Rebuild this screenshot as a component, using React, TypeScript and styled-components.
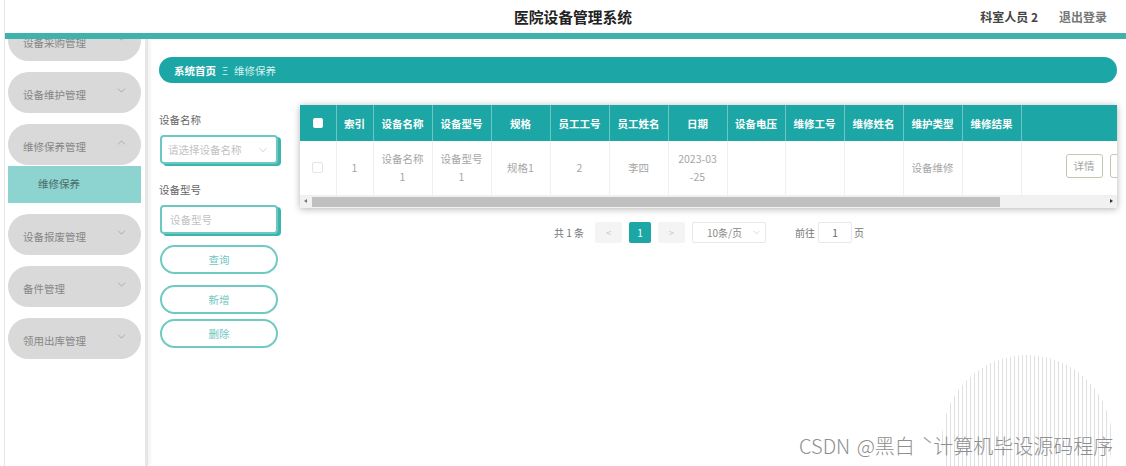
import React from "react";
import styled, { createGlobalStyle } from "styled-components";
import { ChevronDown, ChevronUp } from "lucide-react";

const GlobalStyle = createGlobalStyle`
  html, body {
    margin: 0;
    padding: 0;
    background: #fff;
    overflow: hidden;
  }
  * {
    box-sizing: border-box;
  }
  body {
    font-family: "Noto Sans CJK SC", "Noto Sans", sans-serif;
  }
`;

const menus = [
  { name: "设备采购管理", clipped: true },
  { name: "设备维护管理" },
  { name: "维修保养管理", open: true, children: ["维修保养"] },
  { name: "设备报废管理" },
  { name: "备件管理" },
  { name: "领用出库管理" },
];

const columns = [
  { title: "索引", width: 37 },
  { title: "设备名称", width: 59 },
  { title: "设备型号", width: 59 },
  { title: "规格", width: 59 },
  { title: "员工工号", width: 59 },
  { title: "员工姓名", width: 59 },
  { title: "日期", width: 59 },
  { title: "设备电压", width: 58 },
  { title: "维修工号", width: 59 },
  { title: "维修姓名", width: 59 },
  { title: "维护类型", width: 59 },
  { title: "维修结果", width: 59 },
];

const row = ["1", "设备名称1", "设备型号1", "规格1", "2", "李四", "2023-03\n-25", "", "", "", "设备维修", ""];

export default function App() {
  return (
    <Page>
      <GlobalStyle />
      <Header>
        <HeaderTitle>医院设备管理系统</HeaderTitle>
        <HeaderUser>科室人员 2</HeaderUser>
        <Logout>退出登录</Logout>
      </Header>
      <Body>
        <Sidebar>
          {menus.map((menu) => (
            <MenuGroup key={menu.name} $clipped={menu.clipped}>
              <MenuPill>
                {menu.name}
                <MenuArrow>
                  {menu.open ? <ChevronUp size={13} strokeWidth={1} /> : <ChevronDown size={13} strokeWidth={1} />}
                </MenuArrow>
              </MenuPill>
              {menu.children?.map((child) => <SubItem key={child}>{child}</SubItem>)}
            </MenuGroup>
          ))}
        </Sidebar>
        <Main>
          <Breadcrumb>
            <strong>系统首页</strong>
            <BreadSep>Ξ</BreadSep>
            <span>维修保养</span>
          </Breadcrumb>
          <Content>
            <SearchForm>
              <FieldLabel>设备名称</FieldLabel>
              <Field>
                <Placeholder>请选择设备名称</Placeholder>
                <ChevronDown size={14} strokeWidth={1} color="#b5b5b5" />
              </Field>
              <FieldLabel $gap={16}>设备型号</FieldLabel>
              <Field>
                <Placeholder $inset={2}>设备型号</Placeholder>
              </Field>
              <OutlineButton $top={11}>查询</OutlineButton>
              <OutlineButton $top={11}>新增</OutlineButton>
              <OutlineButton $top={5}>删除</OutlineButton>
            </SearchForm>
            <TableArea>
              <TableCard>
                <TableClip>
                  <Table>
                    <colgroup>
                      <Col $width={36} />
                      {columns.map((c) => (
                        <Col key={c.title} $width={c.width} />
                      ))}
                      <Col $width={240} />
                    </colgroup>
                    <thead>
                      <tr>
                        <Th>
                          <HeadCheck />
                        </Th>
                        {columns.map((c) => (
                          <Th key={c.title}>{c.title}</Th>
                        ))}
                        <Th />
                      </tr>
                    </thead>
                    <tbody>
                      <tr>
                        <Td>
                          <RowCheck />
                        </Td>
                        {row.map((value, i) => (
                          <Td key={i}>{value}</Td>
                        ))}
                        <Td>
                          <Actions>
                            <ActionButton>详情</ActionButton>
                            <ActionButton>修改</ActionButton>
                          </Actions>
                        </Td>
                      </tr>
                    </tbody>
                  </Table>
                </TableClip>
                <ScrollBar>
                  <ScrollArrow $dir="left" />
                  <ScrollTrack>
                    <ScrollThumb />
                  </ScrollTrack>
                  <ScrollArrow $dir="right" />
                </ScrollBar>
              </TableCard>
              <Pagination>
                <PageTotal>共 1 条</PageTotal>
                <PageButton>&lt;</PageButton>
                <PageCurrent>1</PageCurrent>
                <PageButton>&gt;</PageButton>
                <PageSize>
                  10条/页
                  <ChevronDown size={11} strokeWidth={1} color="#b5b5b5" />
                </PageSize>
                <PageText $left={29}>前往</PageText>
                <PageInput>1</PageInput>
                <PageText $left={2}>页</PageText>
              </Pagination>
            </TableArea>
          </Content>
        </Main>
      </Body>
      <Stripes />
      <Watermark>CSDN @黑白 ˋ计算机毕设源码程序</Watermark>
    </Page>
  );
}

const Page = styled.div`
  position: relative;
  width: 1122px;
  height: 466px;
  overflow: hidden;
  margin-left: 4px;
  border-left: 1px solid #e6e6e6;
`;

const Header = styled.header`
  display: flex;
  align-items: center;
  height: 39px;
  padding: 0 19px 0 0;
  background: #fff;
  border-bottom: 6px solid #3fb3ab;
  position: relative;
  z-index: 2;
`;

const HeaderTitle = styled.h1`
  margin: 0 0 0 509px;
  font-size: 14.75px;
  font-weight: 700;
  color: #222;
`;

const HeaderUser = styled.span`
  margin-left: auto;
  font-size: 12px;
  font-weight: 700;
  color: #444;
`;

const Logout = styled.span`
  margin-left: 21px;
  font-size: 12px;
  font-weight: 700;
  color: #777;
`;

const Body = styled.div`
  display: flex;
  height: 427px;
`;

const Sidebar = styled.aside`
  width: 143px;
  padding: 0 0 0 3px;
  border-right: 3px solid #e6e6e6;
  box-shadow: 2px 0 4px rgba(0, 0, 0, 0.06);
  overflow: hidden;
  flex-shrink: 0;
`;

const MenuGroup = styled.div<{ $clipped?: boolean }>`
  margin-top: ${(p) => (p.$clipped ? "-19px" : "11px")};
`;

const MenuPill = styled.div`
  display: flex;
  align-items: center;
  justify-content: space-between;
  width: 133px;
  height: 41px;
  padding: 3px 13px 0 15px;
  border-radius: 21px;
  background: #d9d9d9;
  color: #868686;
  font-size: 10.5px;
`;

const MenuArrow = styled.span`
  display: flex;
  margin-top: -7px;
`;

const SubItem = styled.div`
  width: 133px;
  height: 37px;
  margin: 1px 0;
  padding: 0 0 0 30px;
  background: #8dd3cf;
  color: #4a6b69;
  font-size: 10.5px;
  line-height: 36px;
`;

const Main = styled.main`
  flex: 1;
  min-width: 0;
  padding: 18px 9px 0 11px;
`;

const Breadcrumb = styled.nav`
  display: flex;
  align-items: center;
  height: 26px;
  padding-left: 15px;
  border-radius: 13px;
  background: #1ca7a6;
  color: #d8f1f0;
  font-size: 10.5px;

  strong {
    color: #fff;
    font-weight: 700;
  }
`;

const BreadSep = styled.span`
  margin: 0 6px;
  font-size: 10px;
`;

const Content = styled.div`
  display: flex;
  align-items: flex-start;
  margin-top: 22px;
`;

const SearchForm = styled.div`
  width: 141px;
  padding-top: 5px;
  flex-shrink: 0;
`;

const FieldLabel = styled.div<{ $gap?: number }>`
  height: 20px;
  margin-top: ${(p) => p.$gap ?? 0}px;
  margin-bottom: 5px;
  font-size: 10.5px;
  line-height: 20px;
  color: #666;
`;

const Field = styled.div`
  display: flex;
  align-items: center;
  justify-content: space-between;
  width: 118px;
  height: 29px;
  margin-left: 1px;
  padding: 0 6px;
  border: 2px solid #6cc8c2;
  border-radius: 4px;
  background: #fff;
  box-shadow: 3px 2px 0 #3cb5ad;
`;

const Placeholder = styled.span<{ $inset?: number }>`
  margin-left: ${(p) => p.$inset ?? 0}px;
  font-size: 10.5px;
  color: #c2c2c2;
`;

const OutlineButton = styled.button<{ $top: number }>`
  display: block;
  width: 118px;
  height: 29px;
  margin: ${(p) => p.$top}px 0 0 1px;
  padding: 0;
  border: 2px solid #6fcac4;
  border-radius: 15px;
  background: #fff;
  color: #6fc5bf;
  font-family: inherit;
  font-size: 10.5px;
`;

const TableArea = styled.div`
  flex: 1;
  min-width: 0;
`;

const TableCard = styled.div`
  box-shadow: 0 1px 7px rgba(0, 0, 0, 0.3);
`;

const TableClip = styled.div`
  overflow: hidden;
`;

const Table = styled.table`
  table-layout: fixed;
  width: 961px;
  border-collapse: collapse;
`;

const Col = styled.col<{ $width: number }>`
  width: ${(p) => p.$width}px;
`;

const Th = styled.th`
  height: 36px;
  padding: 0 2px;
  border-right: 1px solid #6cc6c3;
  background: #1ca7a6;
  color: #fff;
  font-size: 10.5px;
  font-weight: 700;
  text-align: center;
`;

const Td = styled.td`
  height: 54px;
  padding: 0 6px;
  border-right: 1px solid #efefef;
  border-bottom: 1px solid #efefef;
  color: #a6a6a6;
  font-size: 10.5px;
  line-height: 18px;
  text-align: center;
  white-space: pre-line;
  word-break: break-all;
`;

const HeadCheck = styled.span`
  display: block;
  width: 10px;
  height: 10px;
  margin: 0 auto;
  border-radius: 2px;
  background: #fff;
`;

const RowCheck = styled.span`
  display: block;
  width: 11px;
  height: 11px;
  margin: 0 auto;
  border: 1px solid #e4e4e4;
  border-radius: 2px;
  background: #fff;
`;

const Actions = styled.div`
  display: flex;
  gap: 7px;
  padding: 0 0 4px 38px;
`;

const ActionButton = styled.button`
  flex-shrink: 0;
  width: 37px;
  height: 24px;
  padding: 0;
  border: 1px solid #bfcbae;
  border-radius: 3px;
  background: #fff;
  color: #a3a3a3;
  font-family: inherit;
  font-size: 10.5px;
`;

const ScrollBar = styled.div`
  display: flex;
  align-items: center;
  height: 12px;
  background: #f1f1f1;
`;

const ScrollArrow = styled.span<{ $dir: "left" | "right" }>`
  width: 12px;
  height: 12px;
  flex-shrink: 0;
  position: relative;

  &::after {
    content: "";
    position: absolute;
    top: 3.5px;
    border-style: solid;
    border-width: 2.5px 3px;
    border-color: transparent;
    ${(p) => (p.$dir === "left" ? "border-right-color: #777; left: 1px;" : "border-left-color: #333; left: 5px;")}
  }
`;

const ScrollTrack = styled.div`
  flex: 1;
  height: 12px;
  padding: 1px 0;
`;

const ScrollThumb = styled.div`
  width: 688px;
  height: 10px;
  background: #c0c0c0;
`;

const Pagination = styled.div`
  display: flex;
  align-items: center;
  height: 21px;
  margin-top: 14px;
  padding-left: 254px;
  font-size: 10px;
  color: #777;
`;

const PageTotal = styled.span`
  width: 41px;
`;

const PageButton = styled.span`
  display: flex;
  align-items: center;
  justify-content: center;
  width: 27px;
  height: 21px;
  border-radius: 2px;
  background: #f4f4f5;
  color: #c0c4cc;
  font-size: 9px;
`;

const PageCurrent = styled.span`
  display: flex;
  align-items: center;
  justify-content: center;
  width: 22px;
  height: 21px;
  margin: 0 7px;
  border-radius: 2px;
  background: #1ca7a6;
  color: #fff;
  font-size: 10px;
`;

const PageSize = styled.span`
  display: flex;
  align-items: center;
  justify-content: space-between;
  width: 74px;
  height: 21px;
  margin-left: 7px;
  padding: 0 3px 0 14px;
  border: 1px solid #e6e8ee;
  border-radius: 2px;
  color: #888;
`;

const PageText = styled.span<{ $left: number }>`
  margin-left: ${(p) => p.$left}px;
`;

const PageInput = styled.span`
  width: 34px;
  height: 21px;
  margin-left: 3px;
  border: 1px solid #e6e8ee;
  border-radius: 2px;
  color: #666;
  line-height: 19px;
  text-align: center;
`;

const Stripes = styled.div`
  position: absolute;
  left: 937px;
  top: 355px;
  width: 170px;
  height: 170px;
  border-radius: 50%;
  background: repeating-linear-gradient(90deg, #e0e0e0 0 1.5px, #fff 1.5px 4px);
`;

const Watermark = styled.div`
  position: absolute;
  left: 794px;
  top: 432px;
  font-size: 20px;
  font-weight: 300;
  line-height: 28px;
  color: #8f8f8f;
  white-space: nowrap;
  word-spacing: 2px;
`;
